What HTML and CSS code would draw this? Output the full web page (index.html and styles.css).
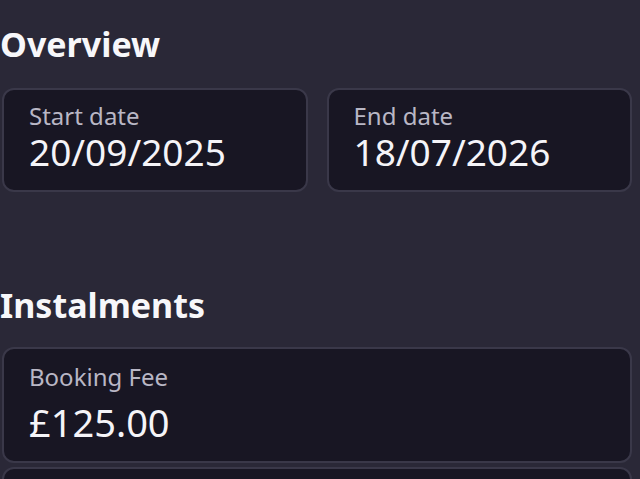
FILE: index.html
```html
<!DOCTYPE html>
<html lang="en">
<head>
<meta charset="utf-8">
<title>Overview</title>
<link rel="stylesheet" href="styles.css">
</head>
<body>
<main class="page">
  <h2 class="heading">Overview</h2>
  <div class="row">
    <div class="card">
      <div class="label">Start date</div>
      <div class="value">20/09/2025</div>
    </div>
    <div class="card">
      <div class="label">End date</div>
      <div class="value">18/07/2026</div>
    </div>
  </div>
  <h2 class="heading heading-second">Instalments</h2>
  <div class="list">
    <div class="card card-fee">
      <div class="label">Booking Fee</div>
      <div class="value value-fee">£125.00</div>
    </div>
    <div class="card card-next"></div>
  </div>
</main>
</body>
</html>
```
FILE: styles.css
```css
html, body {
  margin: 0;
  padding: 0;
  background: #2a2837;
  height: 100%;
  overflow: hidden;
}
body {
  font-family: "Noto Sans", "Open Sans", sans-serif;
  color: #f3f2f7;
}
.page {
  padding: 24px 8px 0 2px;
}
.heading {
  margin: 0 0 0 -2px;
  font-size: 34px;
  line-height: 41px;
  font-weight: 700;
  color: #f7f7fa;
}
.heading-second {
  margin-top: 93px;
}
.row {
  margin-top: 23px;
  display: grid;
  grid-template-columns: 1fr 1fr;
  gap: 19px;
}
.card {
  background: #181623;
  border: 2px solid #3a3849;
  border-radius: 12px;
  padding: 10px 24px 18px 25px;
}
.label {
  font-size: 24px;
  line-height: 32px;
  color: #b9b7c5;
}
.value {
  font-size: 37px;
  line-height: 40px;
  color: #f5f4f8;
}
.list {
  margin-top: 21px;
  display: flex;
  flex-direction: column;
  gap: 4px;
}
.card-fee {
  padding-top: 12px;
  padding-bottom: 18px;
}
.value-fee {
  margin-top: 8px;
  font-size: 38px;
  line-height: 42px;
}
.card-next {
  height: 80px;
}
```
